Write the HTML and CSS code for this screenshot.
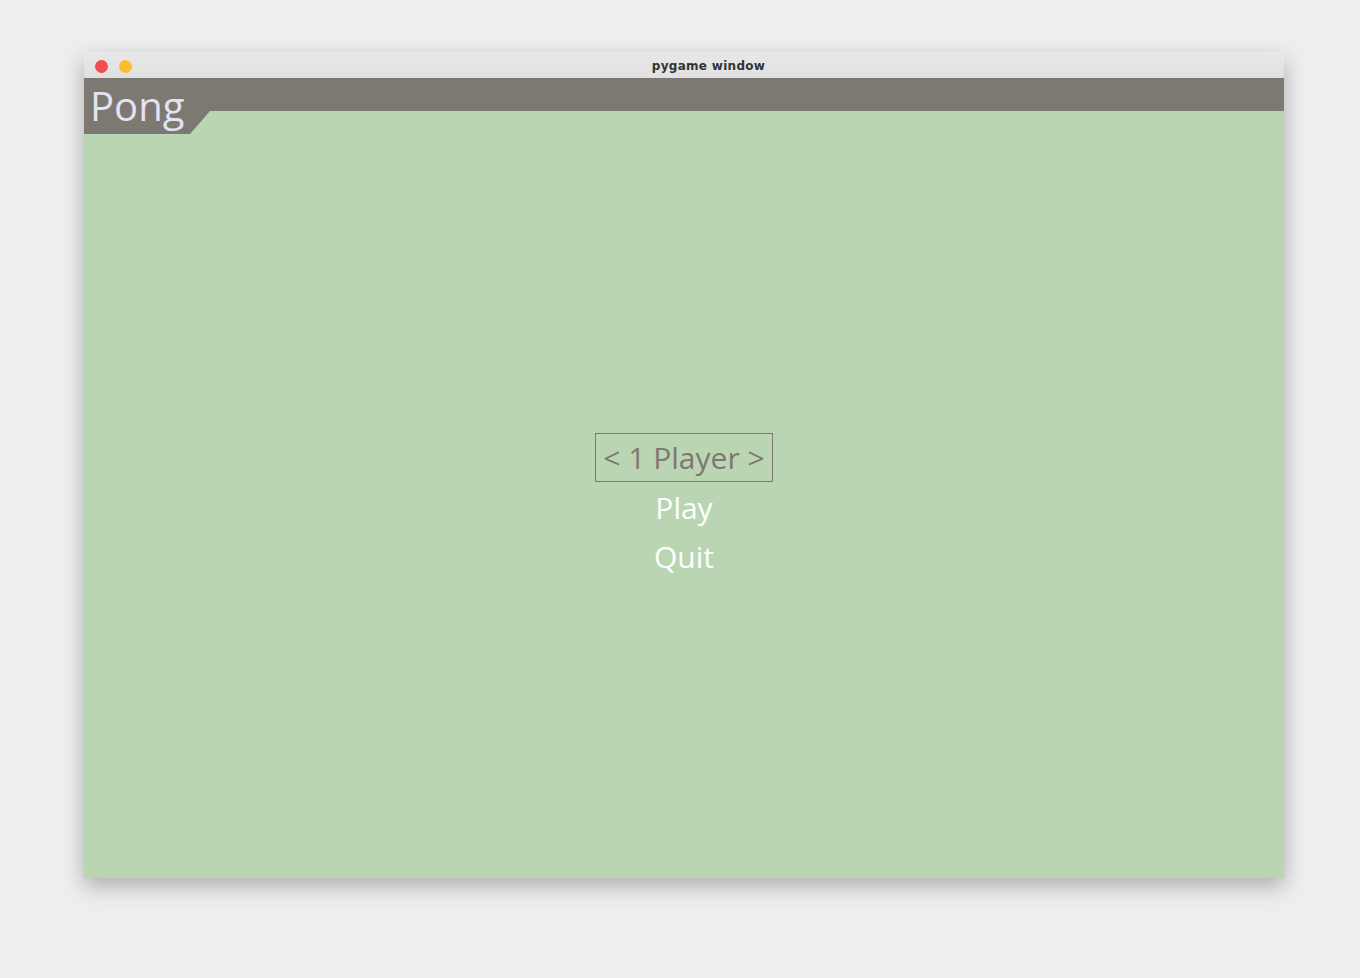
FILE: index.html
```html
<!DOCTYPE html>
<html>
<head>
<meta charset="utf-8">
<link rel="stylesheet" href="styles.css">
</head>
<body>
<div class="window">
  <div class="titlebar">
    <div class="lights"><span class="light red"></span><span class="light yellow"></span></div>
    <div class="title">pygame window</div>
  </div>
  <div class="game">
    <div class="header">
      <div class="tab"><span class="logo">Pong</span></div>
    </div>
    <div class="menu">
      <div class="item selected">&lt; 1 Player &gt;</div>
      <div class="item">Play</div>
      <div class="item">Quit</div>
    </div>
  </div>
</div>
</body>
</html>
```
FILE: styles.css
```css
html, body { margin: 0; padding: 0; }
body {
  background: #eeeeee;
  width: 1360px;
  height: 978px;
  padding-top: 52px;
  box-sizing: border-box;
}
.window {
  margin-left: 84px;
  width: 1200px;
  height: 826px;
  display: flex;
  flex-direction: column;
  box-shadow: 0 8px 22px rgba(0,0,0,0.28);
  border-radius: 5px 5px 0 0;
  overflow: hidden;
}
.titlebar {
  height: 26px;
  box-sizing: border-box;
  padding-top: 2px;
  background: linear-gradient(#e8e8e8, #e0e0e0);
  display: flex;
  align-items: center;
}
.lights { display: flex; gap: 11px; padding-left: 11px; }
.light { width: 13px; height: 13px; border-radius: 50%; display: block; }
.red { background: #f24c50; }
.yellow { background: #fbbd2c; }
.title {
  flex: 1;
  text-align: center;
  margin-right: -1px;
  font-family: "DejaVu Sans", sans-serif;
  font-weight: bold;
  font-size: 12px;
  color: #333;
  letter-spacing: 0.3px;
}
.game {
  flex: 1;
  background: #bad5b1;
  display: flex;
  flex-direction: column;
  font-family: "Open Sans", sans-serif;
}
.header {
  height: 33px;
  background: #7d7872;
  position: relative;
}
.tab {
  position: absolute;
  left: 0;
  top: 0;
  width: 127px;
  height: 56px;
  background: #7d7872;
  clip-path: polygon(0 0, 127px 0, 127px 33px, 126px 33px, 106px 56px, 0 56px);
}
.logo {
  position: absolute;
  left: 6px;
  top: 0px;
  font-size: 40px;
  line-height: 56px;
  color: #e2e2f2;
}
.menu {
  margin-top: 322px;
  display: flex;
  flex-direction: column;
  align-items: center;
}
.item {
  font-size: 30px;
  line-height: 49px;
  height: 49px;
  color: #ffffff;
  text-align: center;
}
.selected {
  color: #7d7872;
  border: 1px solid #7d7872;
  padding: 0 7px;
  height: 47px;
  line-height: 48px;
  margin-left: 0px;
  margin-bottom: 1px;
}
```
